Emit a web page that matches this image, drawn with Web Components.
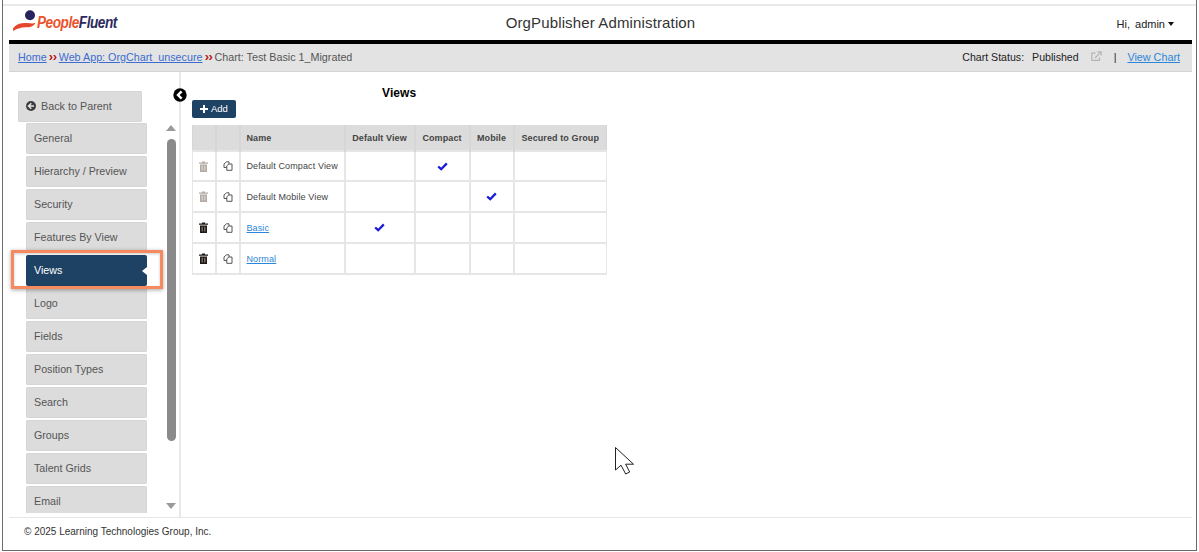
<!DOCTYPE html>
<html>
<head>
<meta charset="utf-8">
<title>OrgPublisher Administration</title>
<style>
  html, body { margin: 0; padding: 0; background: #fff; overflow: hidden; }
</style>
</head>
<body>
<op-app>
  <op-header slot="header"></op-header>
  <op-breadcrumb slot="crumbs"></op-breadcrumb>
  <op-sidebar slot="side">
    <op-nav-item>General</op-nav-item>
    <op-nav-item>Hierarchy / Preview</op-nav-item>
    <op-nav-item>Security</op-nav-item>
    <op-nav-item>Features By View</op-nav-item>
    <op-nav-item active>Views</op-nav-item>
    <op-nav-item>Logo</op-nav-item>
    <op-nav-item>Fields</op-nav-item>
    <op-nav-item>Position Types</op-nav-item>
    <op-nav-item>Search</op-nav-item>
    <op-nav-item>Groups</op-nav-item>
    <op-nav-item>Talent Grids</op-nav-item>
    <op-nav-item>Email</op-nav-item>
  </op-sidebar>
  <op-views slot="main"></op-views>
  <op-footer slot="footer"></op-footer>
  <op-highlight slot="overlay"></op-highlight>
</op-app>

<script>
const FONT = `"Liberation Sans", Arial, sans-serif`

class OpApp extends HTMLElement {
  constructor () {
    super()
    this.attachShadow({ mode: 'open' })
    this.shadowRoot.innerHTML = `
      <style>
        :host {
          display: flex;
          flex-direction: column;
          box-sizing: border-box;
          position: relative;
          width: 1195px;
          height: 551px;
          margin-left: 2px;
          padding: 0 4px 0 6px;
          border-left: 1px solid #6b6b6b;
          border-right: 1px solid #6b6b6b;
          border-bottom: 1px solid #6b6b6b;
          font-family: ${FONT};
          color: #333;
        }
        .strip { height: 2px; margin: 4px -4px 0 -6px; background: #e9e9e9; flex: none; }
        .body { display: flex; height: 445px; flex: none; }
        .cursor { position: absolute; left: 612px; top: 447px; }
      </style>
      <div class="strip"></div>
      <slot name="header"></slot>
      <slot name="crumbs"></slot>
      <div class="body">
        <slot name="side"></slot>
        <slot name="main"></slot>
      </div>
      <slot name="footer"></slot>
      <slot name="overlay"></slot>
      <svg class="cursor" width="20" height="28" viewBox="0 0 20 28">
        <path d="M0.5 0.5V23L6 18.2L10.7 27L14.7 25L10.6 17.2L18.5 17.2Z" fill="#fff" stroke="#222" stroke-width="1"/>
      </svg>
    `
  }
}

class OpHeader extends HTMLElement {
  constructor () {
    super()
    this.attachShadow({ mode: 'open' })
    this.shadowRoot.innerHTML = `
      <style>
        :host {
          display: grid;
          grid-template-columns: 1fr auto 1fr;
          align-items: center;
          height: 34px;
          border-bottom: 4px solid #000;
          background: #fff;
        }
        .logo { display: flex; align-items: center; padding-left: 3px; }
        .brand {
          font: italic bold 16px ${FONT};
          letter-spacing: -0.55px;
          margin-left: 0;
          padding-top: 1px;
          color: #e9542e;
          transform: scaleX(0.85);
          transform-origin: left center;
          white-space: nowrap;
        }
        .brand b { color: #2c2a5e; }
        h1 {
          margin: 0;
          font: normal 15px ${FONT};
          letter-spacing: 0.14px;
          color: #333;
        }
        .user {
          justify-self: end;
          display: flex;
          align-items: center;
          gap: 3px;
          padding-right: 18px;
          font-size: 11px;
          color: #222;
          padding-top: 2px;
        }
        .user span { word-spacing: 2px; }
        .caret { width: 0; height: 0; border: 3.5px solid transparent; border-top: 4px solid #111; border-bottom: 0; }
      </style>
      <div class="logo">
        <svg width="25" height="28" viewBox="0 0 25 28">
          <circle cx="18" cy="6.3" r="5" fill="#27235f"/>
          <path d="M1 19.5C4 15 9 14 14 14C18 14 20 15 23.5 13.8C22 17 19 18.6 15 18.3C10 18 6 19 1.2 22Z" fill="#e4472c"/>
        </svg>
        <div class="brand">People<b>Fluent</b></div>
      </div>
      <h1>OrgPublisher Administration</h1>
      <div class="user"><span>Hi, admin</span><i class="caret"></i></div>
    `
  }
}

class OpBreadcrumb extends HTMLElement {
  constructor () {
    super()
    this.attachShadow({ mode: 'open' })
    this.shadowRoot.innerHTML = `
      <style>
        :host {
          display: flex;
          align-items: center;
          justify-content: space-between;
          height: 27px;
          padding: 0 12px 1px 9px;
          background: #e3e3e3;
          border-bottom: 1px solid #d4d4d4;
          font-size: 10.75px;
          color: #555;
        }
        a { color: #3a6dcf; text-decoration: underline; }
        .sep {
          display: inline-block;
          width: 12px;
          text-align: center;
          color: #b5121b;
          font-weight: bold;
          font-size: 13px;
          line-height: 10px;
          letter-spacing: -0.5px;
        }
        .left, .right { display: flex; align-items: center; white-space: pre; }
        .right { color: #222; font-size: 10.6px; }
        .right a { color: #2b86d9; font-size: 10.8px; }
        .status { margin-right: 8px; }
        .ext { margin: 0 12px; }
        .bar { margin-right: 11px; }
      </style>
      <div class="left"><a>Home</a><span class="sep">››</span><a>Web App: OrgChart_unsecure</a><span class="sep">››</span><span>Chart: Test Basic 1_Migrated</span></div>
      <div class="right">
        <span class="status">Chart Status:</span><span>Published</span>
        <svg class="ext" width="11" height="11" viewBox="0 0 11 11" fill="none" stroke="#b4b4b4" stroke-width="1.2">
          <path d="M8.5 6.5V9.4H0.8V2.2H4.5"/><path d="M4 7L9.6 1.4"/><path d="M6.3 0.8H10.2V4.6" />
        </svg>
        <span class="bar">|</span><a>View Chart</a>
      </div>
    `
  }
}

class OpSidebar extends HTMLElement {
  constructor () {
    super()
    this.attachShadow({ mode: 'open' })
    this.shadowRoot.innerHTML = `
      <style>
        :host {
          display: block;
          position: relative;
          box-sizing: border-box;
          flex: none;
          width: 172px;
          padding: 19px 0 0 9px;
          border-right: 2px solid #e8e8e8;
        }
        .back {
          display: flex;
          align-items: center;
          gap: 5px;
          box-sizing: border-box;
          width: 124px;
          height: 31px;
          padding: 0 0 1px 8px;
          background: #dcdcdc;
          border-radius: 2px;
          box-shadow: inset 0 0 0 1px #d6d6d6;
          font-size: 10.8px;
          color: #555;
        }
        .row { display: flex; height: 390px; margin-top: 1px; }
        .list { width: 121px; margin-left: 8px; overflow: hidden; }
        .scroll { position: relative; width: 10px; margin-left: 19px; }
        .up, .down {
          position: absolute; left: 0; width: 0; height: 0;
          border-left: 5.5px solid transparent; border-right: 5.5px solid transparent;
        }
        .up { top: 2px; border-bottom: 6px solid #9a9a9a; }
        .down { bottom: 4px; border-top: 6px solid #9a9a9a; }
        .thumb { position: absolute; left: 1px; top: 16px; width: 9px; height: 302px; background: #8a8a8a; border-radius: 5px; }
        .toggle { position: absolute; left: 164px; top: 16px; }
      </style>
      <div class="back">
        <svg width="10" height="10" viewBox="0 0 10 10">
          <circle cx="5" cy="5" r="5" fill="#3d3d3d"/>
          <path d="M5.3 2.2L2.5 5L5.3 7.8M2.8 5H8" fill="none" stroke="#e4e4e4" stroke-width="1.5"/>
        </svg>
        <span>Back to Parent</span>
      </div>
      <div class="row">
        <div class="list"><slot></slot></div>
        <div class="scroll"><i class="up"></i><i class="thumb"></i><i class="down"></i></div>
      </div>
      <svg class="toggle" width="14" height="14" viewBox="0 0 14 14">
        <circle cx="7" cy="7" r="6.7" fill="#000"/>
        <path d="M8.6 3.4L5 7L8.6 10.6" fill="none" stroke="#fff" stroke-width="2.4"/>
      </svg>
    `
  }
}

class OpNavItem extends HTMLElement {
  constructor () {
    super()
    this.attachShadow({ mode: 'open' })
    this.shadowRoot.innerHTML = `
      <style>
        :host {
          display: flex;
          align-items: center;
          position: relative;
          box-sizing: border-box;
          height: 31px;
          margin-bottom: 2px;
          padding: 0 0 1px 8px;
          background: #dcdcdc;
          border-radius: 2px;
          box-shadow: inset 0 0 0 1px #d6d6d6;
          font-size: 10.7px;
          color: #555;
        }
        :host([active]) {
          background: #1e4264;
          box-shadow: none;
          color: #fff;
        }
        :host([active])::after {
          content: '';
          position: absolute;
          right: 0;
          top: 12px;
          border: 4px solid transparent;
          border-right: 5px solid #fff;
          border-left: 0;
        }
      </style>
      <slot></slot>
    `
  }
}

// orange marker drawn round the active row, sits over the sidebar
class OpHighlight extends HTMLElement {
  constructor () {
    super()
    this.attachShadow({ mode: 'open' })
    this.shadowRoot.innerHTML = `
      <style>
        :host {
          display: block;
          position: absolute;
          left: 8px;
          top: 250px;
          box-sizing: border-box;
          width: 152px;
          height: 39px;
          border: 3px solid #f58a60;
          box-shadow: 0 1px 4px rgba(0,0,0,0.35), inset 0 1px 3px rgba(0,0,0,0.2);
        }
      </style>
    `
  }
}

class OpViews extends HTMLElement {
  constructor () {
    super()
    this.attachShadow({ mode: 'open' })
    const trash = c => `<svg width="9" height="11" viewBox="0 0 9 11"><path d="M3 0.5H6V1.5H9V2.8H0V1.5H3Z M1 3.4H8V11H1Z" fill="${c}"/><path d="M2.6 4.8V9.6H3.8V4.8ZM5.2 4.8V9.6H6.4V4.8Z" fill="${c === '#1f1a17' ? '#8a7a70' : '#dcd8d4'}"/></svg>`
    const clone = `<svg width="10" height="10" viewBox="0 0 10 10" fill="#fff" stroke="#555" stroke-width="1"><path d="M1 6.5V3L3.5 0.8H6V6.5Z"/><path d="M3.8 9.3V4.8L5.8 3H9V9.3Z"/></svg>`
    const check = `<svg width="11" height="9" viewBox="0 0 11 9"><path d="M1.2 4.5L4.2 7.2L9.8 1.4" fill="none" stroke="#1a1ad8" stroke-width="2.3"/></svg>`
    const row = (del, name, link, marks) => `
      <tr>
        <td class="ic">${trash(del ? '#1f1a17' : '#b3aaa3')}</td>
        <td class="ic">${clone}</td>
        <td class="name">${link ? `<a>${name}</a>` : name}</td>
        <td class="c">${marks === 0 ? check : ''}</td>
        <td class="c">${marks === 1 ? check : ''}</td>
        <td class="c">${marks === 2 ? check : ''}</td>
        <td></td>
      </tr>`
    this.shadowRoot.innerHTML = `
      <style>
        :host { display: block; flex: 1; padding: 14px 0 0 11px; min-width: 0; }
        h2 { margin: 0 0 0 190px; font: bold 12px/14px ${FONT}; color: #000; letter-spacing: 0.1px; }
        .add {
          display: flex;
          align-items: center;
          gap: 3px;
          box-sizing: border-box;
          width: 44px;
          height: 18px;
          margin: 0 0 7px;
          padding: 0 0 1px 8px;
          border: 0;
          border-radius: 2px;
          background: #1e4264;
          color: #fff;
          font: 9.5px ${FONT};
        }
        table {
          border-collapse: collapse;
          table-layout: fixed;
          width: 414px;
          font-size: 9px;
          letter-spacing: 0.12px;
          color: #444;
        }
        th {
          height: 26px;
          padding: 0;
          background: #dcdcdc;
          border: 1px solid #d6d6d6;
          border-width: 0 2px;
          font-weight: bold;
          letter-spacing: 0.1px;
          box-sizing: border-box;
        }
        td {
          height: 31px;
          padding: 0;
          border: 2px solid #e6e6e6;
          box-sizing: border-box;
          text-align: center;
        }
        tr:nth-child(2) td { height: 30px; }
        td:first-child, th:first-child { border-left-width: 1px; }
        td:last-child, th:last-child { border-right-width: 1px; }
        th.name, td.name { text-align: left; padding-left: 6px; }
        td.ic svg, td.c svg { display: block; margin: 0 auto; }
        a { color: #2b86d9; text-decoration: underline; }
      </style>
      <h2>Views</h2>
      <button class="add">
        <svg width="8" height="8" viewBox="0 0 8 8"><path d="M3 0H5V3H8V5H5V8H3V5H0V3H3Z" fill="#fff"/></svg>
        <span>Add</span>
      </button>
      <table>
        <colgroup>
          <col style="width:23px"><col style="width:24px"><col style="width:105px">
          <col style="width:70px"><col style="width:55px"><col style="width:44px"><col style="width:93px">
        </colgroup>
        <tr>
          <th></th><th></th><th class="name">Name</th><th>Default View</th><th>Compact</th><th>Mobile</th><th>Secured to Group</th>
        </tr>
        ${row(false, 'Default Compact View', false, 1)}
        ${row(false, 'Default Mobile View', false, 2)}
        ${row(true, 'Basic', true, 0)}
        ${row(true, 'Normal', true, -1)}
      </table>
    `
  }
}

class OpFooter extends HTMLElement {
  constructor () {
    super()
    this.attachShadow({ mode: 'open' })
    this.shadowRoot.innerHTML = `
      <style>
        :host {
          display: flex;
          align-items: center;
          box-sizing: border-box;
          height: 33px;
          padding: 0 0 5px 15px;
          border-top: 1px solid #e6e6e6;
          font-size: 10px;
          color: #333;
        }
      </style>
      <span>© 2025 Learning Technologies Group, Inc.</span>
    `
  }
}

customElements.define('op-app', OpApp)
customElements.define('op-header', OpHeader)
customElements.define('op-breadcrumb', OpBreadcrumb)
customElements.define('op-sidebar', OpSidebar)
customElements.define('op-nav-item', OpNavItem)
customElements.define('op-highlight', OpHighlight)
customElements.define('op-views', OpViews)
customElements.define('op-footer', OpFooter)
</script>
</body>
</html>
